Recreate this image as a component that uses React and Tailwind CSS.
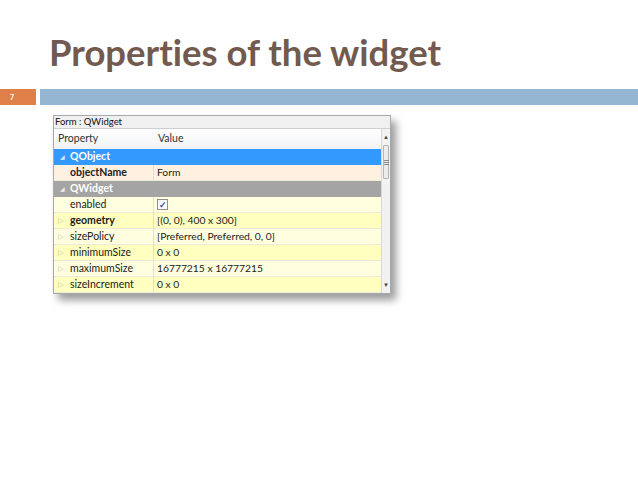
import React from 'react';

const ui = { fontFamily: 'Lato, "Open Sans", sans-serif' };

const rows = [
  { type: 'group', name: 'QObject', color: 'bg-[#3399ff]' },
  { type: 'prop', name: 'objectName', value: 'Form', bold: true, bg: 'bg-[#fff0df]' },
  { type: 'group', name: 'QWidget', color: 'bg-[#a4a4a4]' },
  { type: 'prop', name: 'enabled', check: true, bg: 'bg-[#ffffdf]' },
  { type: 'prop', name: 'geometry', value: '[(0, 0), 400 x 300]', bold: true, arrow: true, bg: 'bg-[#ffffbf]' },
  { type: 'prop', name: 'sizePolicy', value: '[Preferred, Preferred, 0, 0]', arrow: true, bg: 'bg-[#ffffdf]' },
  { type: 'prop', name: 'minimumSize', value: '0 x 0', arrow: true, bg: 'bg-[#ffffbf]' },
  { type: 'prop', name: 'maximumSize', value: '16777215 x 16777215', arrow: true, bg: 'bg-[#ffffdf]' },
  { type: 'prop', name: 'sizeIncrement', value: '0 x 0', arrow: true, bg: 'bg-[#ffffbf]' },
];

const Row = ({ row }) => {
  if (row.type === 'group') {
    return (
      <div className={`flex h-4 items-center ${row.color} text-white`}>
        <span className="ml-[6px] w-[10px] text-[6px] leading-none text-white/80">◢</span>
        <span className="text-[10.5px] font-bold">{row.name}</span>
      </div>
    );
  }
  return (
    <div className={`flex h-4 items-center border-b border-[#ecebd6] ${row.bg} text-[#222]`}>
      <div className="flex h-full w-[100px] shrink-0 items-center border-r border-[#e2e2cf]">
        <span className="ml-[4px] w-[12px] text-[7px] leading-none text-[#b9b9a8]">{row.arrow ? '▷' : ''}</span>
        <span className={`text-[10.5px] ${row.bold ? 'font-bold' : ''}`}>{row.name}</span>
      </div>
      <div className="flex items-center pl-[3px] text-[10.3px]">
        {row.check ? (
          <span className="flex h-[11px] w-[11px] items-center justify-center border border-[#8e8f8f] bg-gradient-to-br from-[#f4f4f4] to-white text-[9px] font-bold leading-none text-[#2a4f9e]">✓</span>
        ) : (
          row.value
        )}
      </div>
    </div>
  );
};

const Scrollbar = () => (
  <div className="flex w-[9px] shrink-0 flex-col border-l border-[#d8d8d8] bg-[#f2f2f2]">
    <div className="flex h-4 items-center justify-center text-[6px] leading-none text-[#444]">▲</div>
    <div className="mx-[1px] flex h-[34px] flex-col items-center justify-center gap-[1px] rounded-[1px] border border-[#b5b5b5] bg-[#ececec]">
      <div className="h-px w-[5px] bg-[#8a8a8a]" />
      <div className="h-px w-[5px] bg-[#8a8a8a]" />
      <div className="h-px w-[5px] bg-[#8a8a8a]" />
    </div>
    <div className="flex-1" />
    <div className="flex h-4 items-center justify-center text-[6px] leading-none text-[#444]">▼</div>
  </div>
);

export default function App() {
  return (
    <div className="h-[478px] w-[638px] overflow-hidden bg-white">
      <h1
        className="pl-[49px] pt-[28px] text-[36.5px] font-bold leading-[48px] tracking-[0px] text-[#735a4f] [font-variant-ligatures:none]"
        style={{ fontFamily: 'Lato, "Open Sans", sans-serif' }}
      >
        Properties of the widget
      </h1>
      <div className="mt-[13px] flex h-4 gap-[4px]">
        <div className="flex w-[36px] items-center bg-[#de8048] pl-[10px] text-[7px] font-bold text-white" style={ui}>
          7
        </div>
        <div className="flex-1 bg-[#94b6d2]" />
      </div>

      <div className="ml-[53px] mt-[10px] w-[338px] border border-[#a9a9a9] bg-[#f0f0f0] shadow-[5px_6px_8px_rgba(0,0,0,0.4)]" style={ui}>
        <div className="h-[12px] pl-[1px] text-[9.5px] leading-[12px] text-[#111]">Form : QWidget</div>
        <div className="flex border-t border-[#cfcfcf] bg-white">
          <div className="flex-1">
            <div className="flex h-[20px] items-center bg-gradient-to-b from-white to-[#f1f2f4] text-[10.5px] text-[#333]">
              <div className="w-[100px] pl-[4px]">Property</div>
              <div className="pl-[4px]">Value</div>
            </div>
            {rows.map((r) => (
              <Row key={r.name} row={r} />
            ))}
          </div>
          <Scrollbar />
        </div>
      </div>
    </div>
  );
}
